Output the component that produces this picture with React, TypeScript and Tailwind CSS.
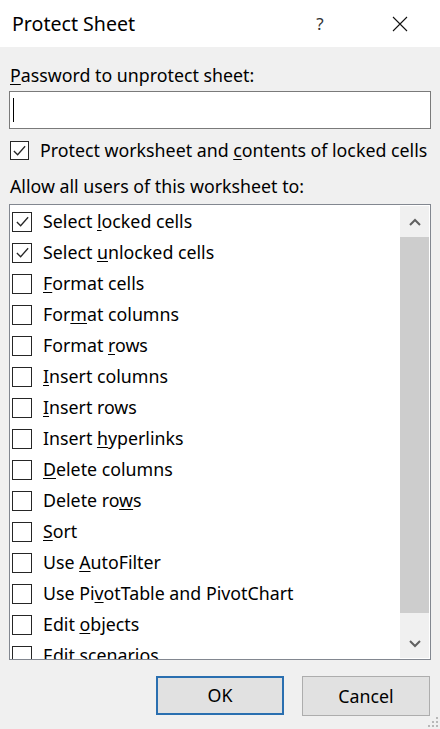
import { useState } from 'react';

type Item = { pre: string; key: string; post: string; checked?: boolean };

const items: Item[] = [
  { pre: 'Select ', key: 'l', post: 'ocked cells', checked: true },
  { pre: 'Select ', key: 'u', post: 'nlocked cells', checked: true },
  { pre: '', key: 'F', post: 'ormat cells' },
  { pre: 'For', key: 'm', post: 'at columns' },
  { pre: 'Format ', key: 'r', post: 'ows' },
  { pre: '', key: 'I', post: 'nsert columns' },
  { pre: '', key: 'I', post: 'nsert rows' },
  { pre: 'Insert ', key: 'h', post: 'yperlinks' },
  { pre: '', key: 'D', post: 'elete columns' },
  { pre: 'Delete ro', key: 'w', post: 's' },
  { pre: '', key: 'S', post: 'ort' },
  { pre: 'Use ', key: 'A', post: 'utoFilter' },
  { pre: 'Use Pi', key: 'v', post: 'otTable and PivotChart' },
  { pre: 'Edit ', key: 'o', post: 'bjects' },
  { pre: 'Edit ', key: 's', post: 'cenarios' },
];

function Check({ on, size }: { on: boolean; size: string }) {
  return (
    <span className={`${size} shrink-0 border border-[#262626] bg-white flex items-center justify-center`}>
      {on && (
        <svg viewBox="0 0 16 16" className="w-[15px] h-[15px]">
          <polyline points="2,8.5 6,12.5 14,3.5" fill="none" stroke="#262626" strokeWidth="1.4" />
        </svg>
      )}
    </span>
  );
}

function Label({ pre, k, post }: { pre: string; k: string; post: string }) {
  return (
    <span className="whitespace-nowrap">
      {pre}
      <span className="underline underline-offset-[2px] decoration-1">{k}</span>
      {post}
    </span>
  );
}

export default function App() {
  const [list, setList] = useState(items);
  const [protect, setProtect] = useState(true);

  const toggle = (i: number) =>
    setList((l) => l.map((it, j) => (j === i ? { ...it, checked: !it.checked } : it)));

  return (
    <div className="relative w-[440px] h-[729px] bg-[#f0f0f0] text-black font-['Noto_Sans','Open_Sans',sans-serif] text-[17.8px] flex flex-col overflow-hidden">
      <div className="h-[47px] bg-white flex items-center shrink-0">
        <span className="pl-[12px] text-[19.6px] flex-1">Protect Sheet</span>
        <span className="w-[20px] text-center text-[17px] mr-[62px] text-[#333]">?</span>
        <svg viewBox="0 0 16 16" className="w-[16px] h-[16px] mr-[32px]">
          <path d="M1 1 L15 15 M15 1 L1 15" stroke="#111" strokeWidth="1.1" fill="none" />
        </svg>
      </div>

      <div className="px-[9px] flex flex-col flex-1">
        <div className="mt-[16px] h-[24px] leading-[24px] pl-[1px]">
          <Label pre="" k="P" post="assword to unprotect sheet:" />
        </div>
        <div className="mt-[4px] h-[38px] bg-white border border-[#7a7a7a] flex items-center pl-[3px]">
          <span className="w-[1px] h-[24px] bg-black" />
        </div>

        <div className="mt-[9px] h-[24px] flex items-center gap-[11px] pl-[1px] cursor-default" onClick={() => setProtect(!protect)}>
          <Check on={protect} size="w-[19px] h-[19px]" />
          <Label pre="Protect worksheet and " k="c" post="ontents of locked cells" />
        </div>

        <div className="mt-[12px] h-[24px] leading-[24px] pl-[1px]">Allow all users of this worksheet to:</div>

        <div className="mt-[6px] h-[456px] bg-white border border-[#828790] flex overflow-hidden">
          <div className="flex-1 pt-[1px] overflow-hidden">
            {list.map((it, i) => (
              <div key={i} className="h-[31px] flex items-center gap-[11px] pl-[2px] cursor-default" onClick={() => toggle(i)}>
                <Check on={!!it.checked} size="w-[20px] h-[20px]" />
                <Label pre={it.pre} k={it.key} post={it.post} />
              </div>
            ))}
          </div>
          <div className="w-[29px] mr-[1px] my-[1px] bg-[#f0f0f0] flex flex-col shrink-0">
            <div className="h-[31px] flex items-center justify-center">
              <svg viewBox="0 0 12 8" className="w-[12px] h-[8px]">
                <path d="M1 7 L6 2 L11 7" stroke="#606060" strokeWidth="2" fill="none" />
              </svg>
            </div>
            <div className="h-[376px] bg-[#cdcdcd]" />
            <div className="flex-1 flex items-end justify-center pb-[10px]">
              <svg viewBox="0 0 12 8" className="w-[12px] h-[8px]">
                <path d="M1 1 L6 6 L11 1" stroke="#606060" strokeWidth="2" fill="none" />
              </svg>
            </div>
          </div>
        </div>

        <div className="mt-[16px] flex justify-end gap-[18px] pr-[1px]">
          <button className="w-[128px] h-[39px] bg-[#e1e1e1] border-2 border-[#2a6fb0] text-[17.8px]">OK</button>
          <button className="w-[128px] h-[40px] bg-[#e1e1e1] border border-[#adadad] text-[17.8px]">Cancel</button>
        </div>
      </div>

      <svg viewBox="0 0 12 12" className="absolute right-[1px] bottom-[1px] w-[12px] h-[12px]">
        {[
          [9, 1], [9, 5], [5, 5], [9, 9], [5, 9], [1, 9],
        ].map(([x, y], i) => (
          <rect key={i} x={x} y={y} width="2" height="2" fill="#b8b8b8" />
        ))}
      </svg>
    </div>
  );
}
